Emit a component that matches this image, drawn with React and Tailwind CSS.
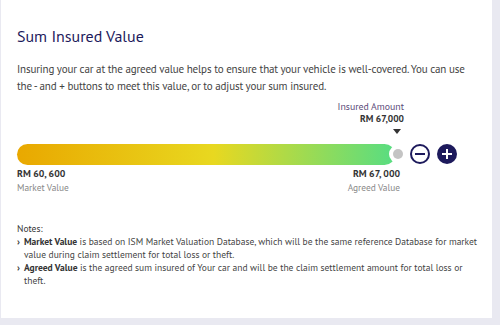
import React from "react";

export default function App() {
  return (
    <div className="min-h-screen bg-[#e9e9f1] pl-px font-['PT_Sans','Roboto_Condensed',sans-serif]">
      <div className="w-[491px] h-[318px] bg-white pl-4 pr-5 pt-[25px]">
        <h1 className="text-[16px] leading-[22px] text-[#1d1a5c] font-normal">Sum Insured Value</h1>
        <p className="mt-[14px] text-[11px] leading-[17px] tracking-[-0.15px] text-[#444]">
          Insuring your car at the agreed value helps to ensure that your vehicle is well-covered. You can use the - and + buttons to meet this value, or to adjust your sum insured.
        </p>
        <div className="mt-[6px] flex">
          <div className="w-[387px] flex flex-col items-end">
            <div className="text-[9.8px] leading-[12px] text-[#5b4a78]">Insured Amount</div>
            <div className="text-[9.5px] leading-[12px] font-bold text-[#333]">RM 67,000</div>
            <div className="mr-[3px] mt-[3.5px] w-0 h-0 border-l-[4px] border-r-[4px] border-t-[5px] border-l-transparent border-r-transparent border-t-[#333]"></div>
          </div>
        </div>
        <div className="mt-[9.5px] flex items-center">
          <div className="relative w-[391px] h-[22px] flex items-center">
            <div className="w-[378px] h-[21px] rounded-l-full rounded-r-full bg-[linear-gradient(90deg,#e9a800_0%,#e8d820_52%,#57dd82_100%)]"></div>
            <div className="absolute left-[372px] top-1/2 -translate-y-1/2 w-[18px] h-[18px] rounded-full bg-white flex items-center justify-center">
              <div className="w-[10px] h-[10px] rounded-full bg-[#c4c4c4]"></div>
            </div>
          </div>
          <button className="ml-[2px] w-[20px] h-[20px] rounded-full border-2 border-[#1d1a5c] flex items-center justify-center">
            <span className="block w-[10px] h-[2px] bg-[#1d1a5c]"></span>
          </button>
          <button className="ml-[7px] w-[20px] h-[20px] rounded-full bg-[#1d1a5c] relative flex items-center justify-center">
            <span className="absolute w-[10px] h-[2.5px] bg-white"></span>
            <span className="absolute w-[2.5px] h-[10px] bg-white"></span>
          </button>
        </div>
        <div className="mt-[2px] w-[383px] flex justify-between">
          <div>
            <div className="text-[9.8px] leading-[14px] font-bold text-[#333]">RM 60, 600</div>
            <div className="text-[9.4px] leading-[14px] text-[#888]">Market Value</div>
          </div>
          <div className="flex flex-col items-end">
            <div className="text-[9.8px] leading-[14px] font-bold text-[#333]">RM 67, 000</div>
            <div className="text-[9.4px] leading-[14px] text-[#888]">Agreed Value</div>
          </div>
        </div>
        <div className="mt-[26.5px] -mr-3 text-[9.5px] leading-[13px] text-[#444]">
          <div className="text-[#333]">Notes:</div>
          <div className="flex">
            <span className="w-[7px] shrink-0 font-bold text-[#333]">›</span>
            <span><b className="text-[#333]">Market Value</b> is based on ISM Market Valuation Database, which will be the same reference Database for market value during claim settlement for total loss or theft.</span>
          </div>
          <div className="flex">
            <span className="w-[7px] shrink-0 font-bold text-[#333]">›</span>
            <span><b className="text-[#333]">Agreed Value</b> is the agreed sum insured of Your car and will be the claim settlement amount for total loss or theft.</span>
          </div>
        </div>
      </div>
    </div>
  );
}
